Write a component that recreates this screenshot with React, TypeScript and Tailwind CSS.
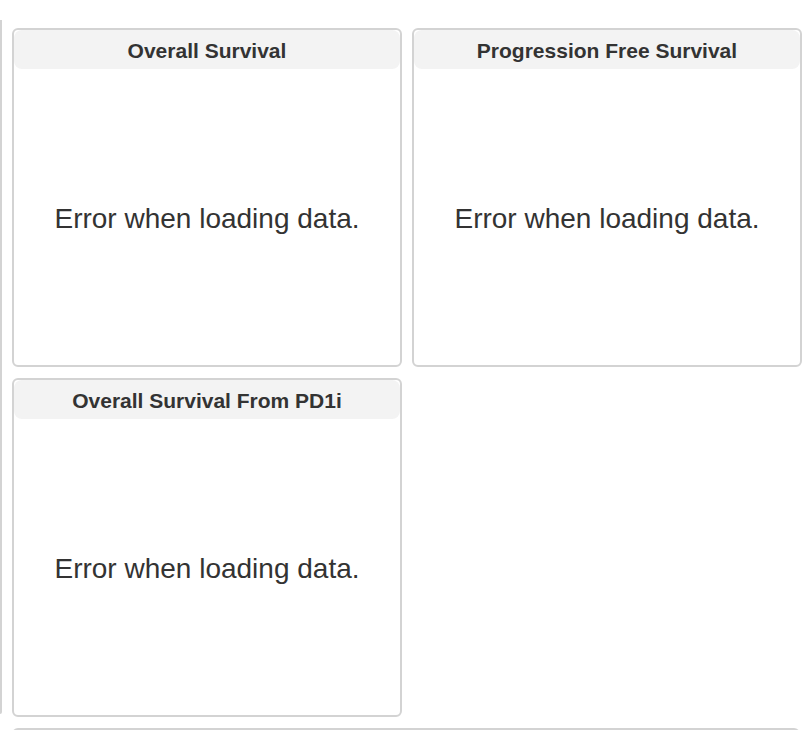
const charts = [
  { title: 'Overall Survival' },
  { title: 'Progression Free Survival' },
  { title: 'Overall Survival From PD1i' },
];

function ChartCard({ title }: { title: string }) {
  return (
    <div className="flex h-[339px] flex-col rounded-[6px] border-2 border-[#d3d3d3] bg-white">
      <div className="flex h-[39px] items-center justify-center rounded-[8px] bg-[#f3f3f3] pt-[2px] text-[21px] font-bold text-[#333]">
        {title}
      </div>
      <div className="flex flex-1 items-center justify-center pt-[4px] text-[28px] text-[#333]">
        Error when loading data.
      </div>
    </div>
  );
}

export default function App() {
  return (
    <div
      className="relative h-[730px] w-[810px] overflow-hidden bg-white"
      style={{ fontFamily: '"Liberation Sans", Arial, sans-serif' }}
    >
      <div className="flex">
        <div className="mt-[20px] h-[694px] w-[2px] rounded-br-[3px] bg-[#d3d3d3]" />
        <div className="flex flex-col pl-[10px] pt-[28px]">
          <div className="grid grid-cols-[390px_390px] gap-x-[10px] gap-y-[11px]">
            {charts.map((c) => (
              <ChartCard key={c.title} title={c.title} />
            ))}
          </div>
          <div className="mt-[11px] h-[40px] w-[788px] rounded-[6px] border-2 border-[#d3d3d3]" />
        </div>
      </div>
    </div>
  );
}
